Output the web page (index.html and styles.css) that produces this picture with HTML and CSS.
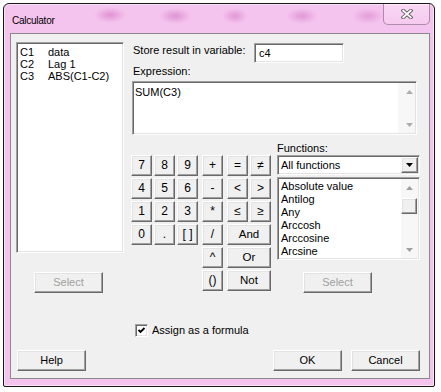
FILE: index.html
```html
<!DOCTYPE html>
<html>
<head>
<meta charset="utf-8">
<link rel="stylesheet" href="styles.css">
</head>
<body>
<div class="window">
  <div class="titlebar">
    <span class="title">Calculator</span>
    <div class="close">
      <svg width="12" height="10" viewBox="0 0 12 10">
        <path d="M2.2 1.6 L9.8 8.4 M9.8 1.6 L2.2 8.4" stroke="#5e5a5e" stroke-width="3.6" stroke-linecap="square" fill="none"/>
        <path d="M2.2 1.6 L9.8 8.4 M9.8 1.6 L2.2 8.4" stroke="#ffffff" stroke-width="1.8" stroke-linecap="square" fill="none"/>
      </svg>
    </div>
  </div>
  <div class="client">
    <div class="main">
      <div class="left">
        <div class="sunken vars">
          <div class="var"><span class="vcol">C1</span><span>data</span></div>
          <div class="var"><span class="vcol">C2</span><span>Lag 1</span></div>
          <div class="var"><span class="vcol">C3</span><span>ABS(C1-C2)</span></div>
        </div>
        <div class="btn disabled select-left">Select</div>
      </div>
      <div class="right">
        <div class="store-row">
          <span class="store-label">Store result in variable:</span>
          <div class="sunken store">c4</div>
        </div>
        <div class="expr-label">Expression:</div>
        <div class="sunken expr">
          <div class="expr-text">SUM(C3)</div>
          <div class="vscroll expr-scroll">
            <div class="sb-arrow"><svg width="7" height="4" viewBox="0 0 7 4"><polygon points="0,4 3.5,0 7,4" fill="#adadad"/></svg></div>
            <div class="sb-track"></div>
            <div class="sb-arrow"><svg width="7" height="4" viewBox="0 0 7 4"><polygon points="0,0 3.5,4 7,0" fill="#adadad"/></svg></div>
          </div>
        </div>
        <div class="lower">
          <div class="keypad">
            <div class="btn key">7</div>
            <div class="btn key">8</div>
            <div class="btn key">9</div>
            <div class="btn key">+</div>
            <div class="btn key">=</div>
            <div class="btn key">≠</div>
            <div class="btn key">4</div>
            <div class="btn key">5</div>
            <div class="btn key">6</div>
            <div class="btn key">-</div>
            <div class="btn key">&lt;</div>
            <div class="btn key">&gt;</div>
            <div class="btn key">1</div>
            <div class="btn key">2</div>
            <div class="btn key">3</div>
            <div class="btn key">*</div>
            <div class="btn key">≤</div>
            <div class="btn key">≥</div>
            <div class="btn key">0</div>
            <div class="btn key">.</div>
            <div class="btn key">[ ]</div>
            <div class="btn key">/</div>
            <div class="btn key wide">And</div>
            <div class="btn key op-col">^</div>
            <div class="btn key wide">Or</div>
            <div class="btn key op-col">()</div>
            <div class="btn key wide">Not</div>
          </div>
          <div class="funcs">
            <div class="func-label">Functions:</div>
            <div class="sunken combo">
              <span class="combo-text">All functions</span>
              <div class="combo-btn"><svg width="7" height="4" viewBox="0 0 7 4"><polygon points="0,0 3.5,4 7,0" fill="#000"/></svg></div>
            </div>
            <div class="sunken funclist">
              <div class="items">
                <div class="item">Absolute value</div>
                <div class="item">Antilog</div>
                <div class="item">Any</div>
                <div class="item">Arccosh</div>
                <div class="item">Arccosine</div>
                <div class="item">Arcsine</div>
              </div>
              <div class="vscroll">
                <div class="sb-arrow"><svg width="7" height="4" viewBox="0 0 7 4"><polygon points="0,4 3.5,0 7,4" fill="#a0a0a0"/></svg></div>
                <div class="sb-track"><div class="thumb"></div></div>
                <div class="sb-arrow"><svg width="7" height="4" viewBox="0 0 7 4"><polygon points="0,0 3.5,4 7,0" fill="#a0a0a0"/></svg></div>
              </div>
            </div>
            <div class="btn disabled select-right">Select</div>
          </div>
        </div>
      </div>
    </div>
    <div class="check-row">
      <div class="sunken checkbox">
        <svg width="9" height="9" viewBox="0 0 9 9"><path d="M1.5 4 L3.5 6 L7.5 2" stroke="#000" stroke-width="1.9" fill="none"/></svg>
      </div>
      <span class="check-label">Assign as a formula</span>
    </div>
    <div class="bottom-row">
      <div class="btn action">Help</div>
      <div class="spacer"></div>
      <div class="btn action ok">OK</div>
      <div class="btn action">Cancel</div>
    </div>
  </div>
</div>
</body>
</html>
```

FILE: styles.css
```css
* { box-sizing: border-box; }

html, body {
  margin: 0;
  padding: 0;
  background: #ffffff;
}

body {
  font-family: "Liberation Sans", Arial, sans-serif;
  font-size: 11px;
  color: #000;
}

.window {
  margin: 3px 0 0 3px;
  width: 432px;
  height: 384px;
  border: 1px solid #161616;
  border-radius: 6px 6px 2px 2px;
  background: #f5c4ee;
  box-shadow: inset 0 0 0 1px rgba(255, 255, 255, 0.5);
  padding: 0 4px 7px 6px;
  display: flex;
  flex-direction: column;
}

.titlebar {
  height: 29px;
  display: flex;
  justify-content: space-between;
  align-items: flex-start;
  background:
    radial-gradient(ellipse 16px 8px at 100px 11px, rgba(200, 100, 185, 0.5), transparent),
    radial-gradient(ellipse 16px 8px at 165px 12px, rgba(200, 100, 185, 0.5), transparent),
    radial-gradient(ellipse 13px 8px at 225px 12px, rgba(200, 100, 185, 0.45), transparent),
    radial-gradient(ellipse 16px 8px at 292px 12px, rgba(200, 100, 185, 0.45), transparent),
    radial-gradient(ellipse 16px 8px at 358px 12px, rgba(200, 100, 185, 0.4), transparent);
}

.title {
  margin: 11px 0 0 2px;
  font-size: 10px;
  line-height: 12px;
  letter-spacing: -0.25px;
}

.close {
  width: 47px;
  height: 21px;
  border: 1px solid rgba(110, 80, 110, 0.55);
  border-top: none;
  border-radius: 0 0 5px 5px;
  background: linear-gradient(rgba(255, 255, 255, 0.35), rgba(255, 255, 255, 0.1));
  display: flex;
  align-items: center;
  justify-content: center;
}

.client {
  height: 346px;
  background: #f0f0f0;
  border: 1px solid #8a8a8a;
  display: flex;
  flex-direction: column;
}

.sunken {
  background: #fff;
  border: 1px solid;
  border-color: #a0a0a0 #ffffff #ffffff #a0a0a0;
  box-shadow: inset 1px 1px #696969, inset -1px -1px #e3e3e3;
}

.btn {
  display: flex;
  align-items: center;
  justify-content: center;
  height: 21px;
  line-height: 13px;
  background: #f0f0f0;
  border: 1px solid;
  border-color: #ffffff #696969 #696969 #ffffff;
  box-shadow: inset -1px -1px #a0a0a0, inset 1px 1px #e3e3e3;
}

.btn.disabled {
  color: #a0a0a0;
}

.main {
  display: flex;
  padding: 8px 0 0 5px;
}

.left {
  width: 108px;
  display: flex;
  flex-direction: column;
}

.vars {
  height: 211px;
  padding: 3px 3px;
  line-height: 12px;
}

.var {
  display: flex;
  white-space: nowrap;
}

.vcol {
  width: 28px;
}

.select-left {
  width: 69px;
  margin: 19px 0 0 18px;
}

.right {
  margin-left: 7px;
  display: flex;
  flex-direction: column;
}

.store-row {
  display: flex;
  align-items: flex-start;
  margin-top: 1px;
}

.store-label {
  width: 121px;
  margin: 1px 0 0 2px;
  line-height: 13px;
  white-space: nowrap;
}

.store {
  width: 90px;
  height: 20px;
  padding: 3px 0 0 4px;
  line-height: 13px;
}

.expr-label {
  margin: 2px 0 0 2px;
  line-height: 13px;
}

.expr {
  margin: 3px 0 0 1px;
  width: 285px;
  height: 54px;
  padding: 1px;
  display: flex;
}

.expr-text {
  flex: 1;
  padding: 3px 0 0 1px;
  line-height: 13px;
}

.vscroll {
  width: 17px;
  display: flex;
  flex-direction: column;
  background: #f7f7f7;
}

.sb-arrow {
  height: 17px;
  display: flex;
  align-items: center;
  justify-content: center;
}

.sb-arrow svg {
  display: block;
}

.expr-scroll .sb-arrow {
  padding-left: 6px;
}

.sb-track {
  flex: 1;
}

.thumb {
  margin: 2px 1px 0 0;
  height: 16px;
  background: #f0f0f0;
  border: 1px solid;
  border-color: #ffffff #696969 #696969 #ffffff;
  box-shadow: inset -1px -1px #a0a0a0, inset 1px 1px #e3e3e3;
}

.lower {
  display: flex;
  align-items: flex-start;
  margin-top: 7px;
}

.keypad {
  display: grid;
  grid-template-columns: 23px 23px 25px 25px 23px 21px;
  grid-auto-rows: 21px;
  row-gap: 2px;
  margin-top: 13px;
  font-size: 12px;
}

.key {
  width: 21px;
}

.key.wide {
  width: 44px;
  grid-column: 5 / span 2;
  font-size: 11.5px;
}

.key.op-col {
  grid-column: 4;
}

.funcs {
  width: 143px;
  margin-left: 6px;
  display: flex;
  flex-direction: column;
}

.func-label {
  line-height: 13px;
}

.combo {
  height: 20px;
  padding: 1px;
  display: flex;
  align-items: center;
}

.combo-text {
  flex: 1;
  padding-left: 2px;
  line-height: 13px;
}

.combo-btn {
  width: 17px;
  height: 16px;
  display: flex;
  align-items: center;
  justify-content: center;
  background: #f0f0f0;
  border: 1px solid;
  border-color: #ffffff #696969 #696969 #ffffff;
  box-shadow: inset -1px -1px #a0a0a0, inset 1px 1px #e3e3e3;
}

.funclist {
  margin-top: 2px;
  height: 83px;
  padding: 1px;
  display: flex;
}

.items {
  flex: 1;
  padding: 1px 0 0 2px;
  line-height: 13px;
  overflow: hidden;
  white-space: nowrap;
}

.select-right {
  width: 69px;
  margin: 12px 0 0 26px;
}

.check-row {
  display: flex;
  align-items: center;
  height: 13px;
  margin: 31px 0 0 124px;
}

.checkbox {
  width: 13px;
  height: 13px;
  padding: 1px;
  display: flex;
}

.checkbox svg {
  display: block;
}

.check-label {
  margin-left: 4px;
  line-height: 13px;
}

.bottom-row {
  display: flex;
  margin-top: 13px;
  padding: 0 9px 0 6px;
}

.action {
  width: 69px;
}

.spacer {
  flex: 1;
}

.ok {
  margin-right: 9px;
}
```
